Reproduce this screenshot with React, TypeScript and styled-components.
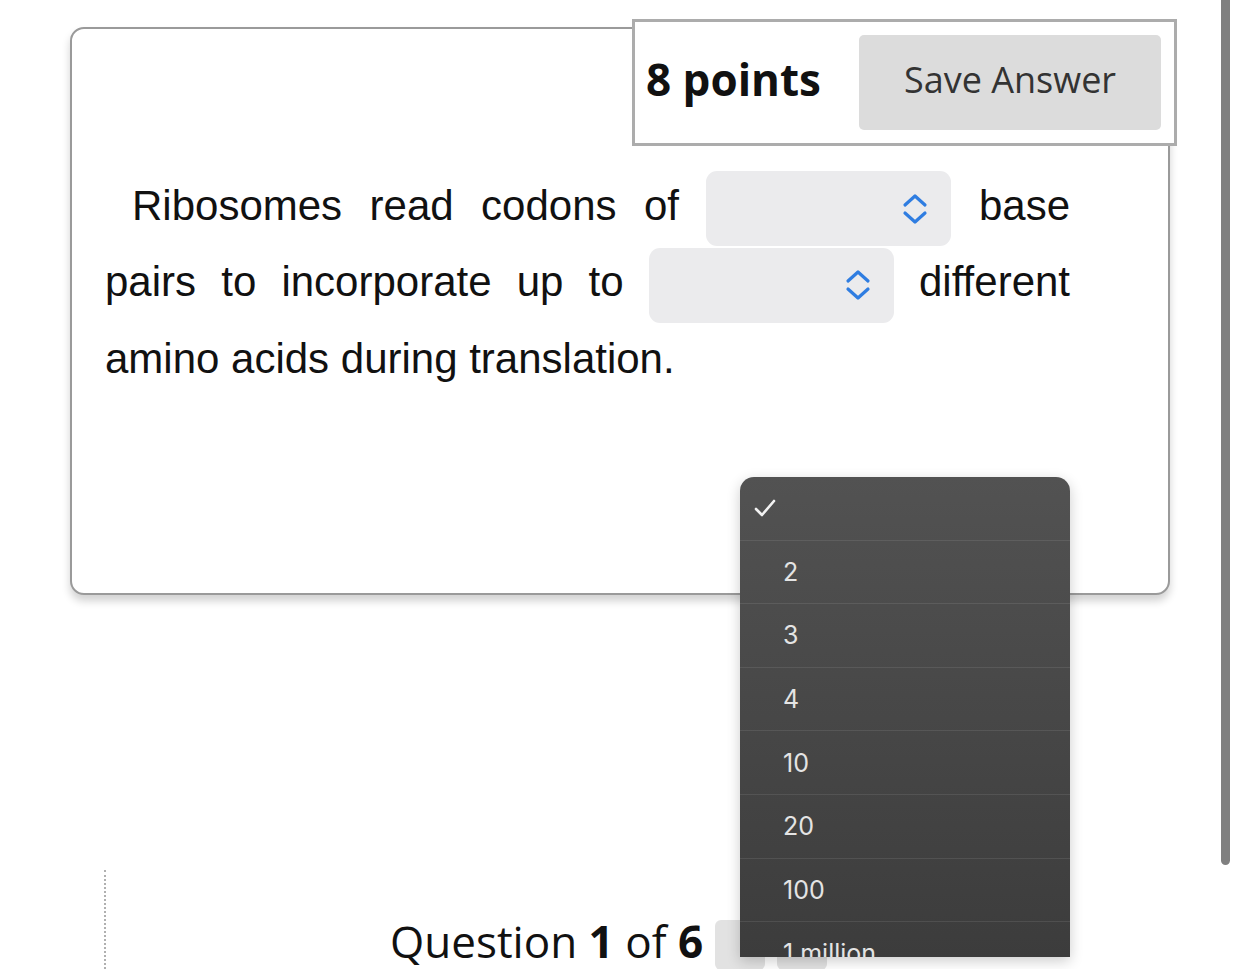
import React from "react";
import styled, { createGlobalStyle } from "styled-components";

const options = ["2", "3", "4", "10", "20", "100", "1 million"];

const Global = createGlobalStyle`
  html, body { margin: 0; padding: 0; background: #fff; }
  body { font-family: "Liberation Sans", Arial, sans-serif; overflow: hidden; }
`;

const Chevrons = () => (
  <svg width="30" height="32" viewBox="0 0 30 32" fill="none">
    <path d="M5 12 L15 3 L25 12" stroke="#2f7de1" strokeWidth="3.2" strokeLinecap="round" strokeLinejoin="round" />
    <path d="M5 20 L15 29 L25 20" stroke="#2f7de1" strokeWidth="3.2" strokeLinecap="round" strokeLinejoin="round" />
  </svg>
);

const Check = () => (
  <svg width="22" height="20" viewBox="0 0 22 20" fill="none">
    <path d="M2 11 L8 17 L20 3" stroke="#f2f2f2" strokeWidth="2.6" strokeLinecap="round" strokeLinejoin="round" />
  </svg>
);

const App = () => {
  return (
    <Page>
      <Global />
      <Card>
        <HeaderRow>
          <PointsBox>
            <Points>8 points</Points>
            <SaveButton>Save Answer</SaveButton>
          </PointsBox>
        </HeaderRow>
        <Question>
          Ribosomes read codons of{" "}
          <Select>
            <Chevrons />
          </Select>{" "}
          base pairs to incorporate up to{" "}
          <Select>
            <Chevrons />
          </Select>{" "}
          different amino acids during translation.
        </Question>
      </Card>

      <Footer>
        <Counter>
          Question <b>1</b> of <b>6</b>
        </Counter>
        <NavButton />
        <NavButton />
      </Footer>

      <Menu>
        <MenuItem $first>
          <Check />
        </MenuItem>
        {options.map((o) => (
          <MenuItem key={o}>{o}</MenuItem>
        ))}
      </Menu>

      <ScrollThumb />
    </Page>
  );
};

const Page = styled.div`
  position: relative;
  width: 1241px;
  height: 969px;
  padding: 27px 0 0 70px;
  box-sizing: border-box;
`;

const Card = styled.div`
  width: 1100px;
  height: 568px;
  box-sizing: border-box;
  border: 2px solid #9a9a9a;
  border-radius: 14px;
  box-shadow: 0 6px 8px rgba(0, 0, 0, 0.18);
  padding: 0 98px 0 33px;
  background: #fff;
`;

const HeaderRow = styled.div`
  display: flex;
  justify-content: flex-end;
  margin: -10px -107px 0 0;
`;

const PointsBox = styled.div`
  display: flex;
  align-items: center;
  width: 545px;
  height: 127px;
  box-sizing: border-box;
  border: 3px solid #acacac;
  background: #fff;
  padding: 0 13px 0 11px;
  justify-content: space-between;
`;

const Points = styled.div`
  font-family: "Open Sans", sans-serif;
  font-weight: 700;
  font-size: 44px;
  color: #111;
  padding-bottom: 8px;
`;

const SaveButton = styled.div`
  width: 302px;
  height: 95px;
  box-sizing: border-box;
  padding-bottom: 6px;
  background: #dcdcdc;
  border-radius: 5px;
  display: flex;
  align-items: center;
  justify-content: center;
  font-family: "Open Sans", sans-serif;
  font-size: 36px;
  color: #333;
`;

const Question = styled.p`
  margin: 24px 0 0;
  font-size: 42px;
  line-height: 72px;
  color: #111;
  text-align: justify;
  text-indent: 27px;
`;

const Select = styled.span`
  display: inline-flex;
  align-items: center;
  justify-content: flex-end;
  box-sizing: border-box;
  width: 245px;
  height: 75px;
  padding-right: 21px;
  vertical-align: middle;
  background: #ebebed;
  border-radius: 11px;
  text-indent: 0;
`;

const Footer = styled.div`
  display: flex;
  align-items: flex-end;
  height: 99px;
  margin: 275px 0 0 34px;
  border-left: 2px dotted #b0b0b0;
`;

const Counter = styled.div`
  font-family: "Open Sans", sans-serif;
  font-size: 44px;
  color: #111;
  margin: 0 0 -2px 284px;
  b { font-weight: 700; }
`;

const NavButton = styled.div`
  width: 50px;
  height: 50px;
  margin-left: 12px;
  margin-bottom: -1px;
  background: #e2e2e2;
  border-radius: 6px;
  flex-shrink: 0;
`;

const Menu = styled.div`
  position: absolute;
  left: 740px;
  top: 477px;
  width: 330px;
  height: 480px;
  overflow: hidden;
  border-radius: 14px 14px 0 0;
  background: linear-gradient(#525252, #3c3c3c);
  box-shadow: 0 4px 14px rgba(0, 0, 0, 0.2);
`;

const MenuItem = styled.div<{ $first?: boolean }>`
  height: 63.6px;
  box-sizing: border-box;
  display: flex;
  align-items: center;
  padding-left: ${(p) => (p.$first ? "14px" : "43px")};
  border-bottom: 1px solid rgba(255, 255, 255, 0.09);
  font-family: "Inter", "Roboto", sans-serif;
  font-size: 25px;
  color: #e4e4e4;
`;

const ScrollThumb = styled.div`
  position: absolute;
  left: 1221px;
  top: -8px;
  width: 9px;
  height: 873px;
  border-radius: 5px;
  background: #808080;
`;

export default App;
